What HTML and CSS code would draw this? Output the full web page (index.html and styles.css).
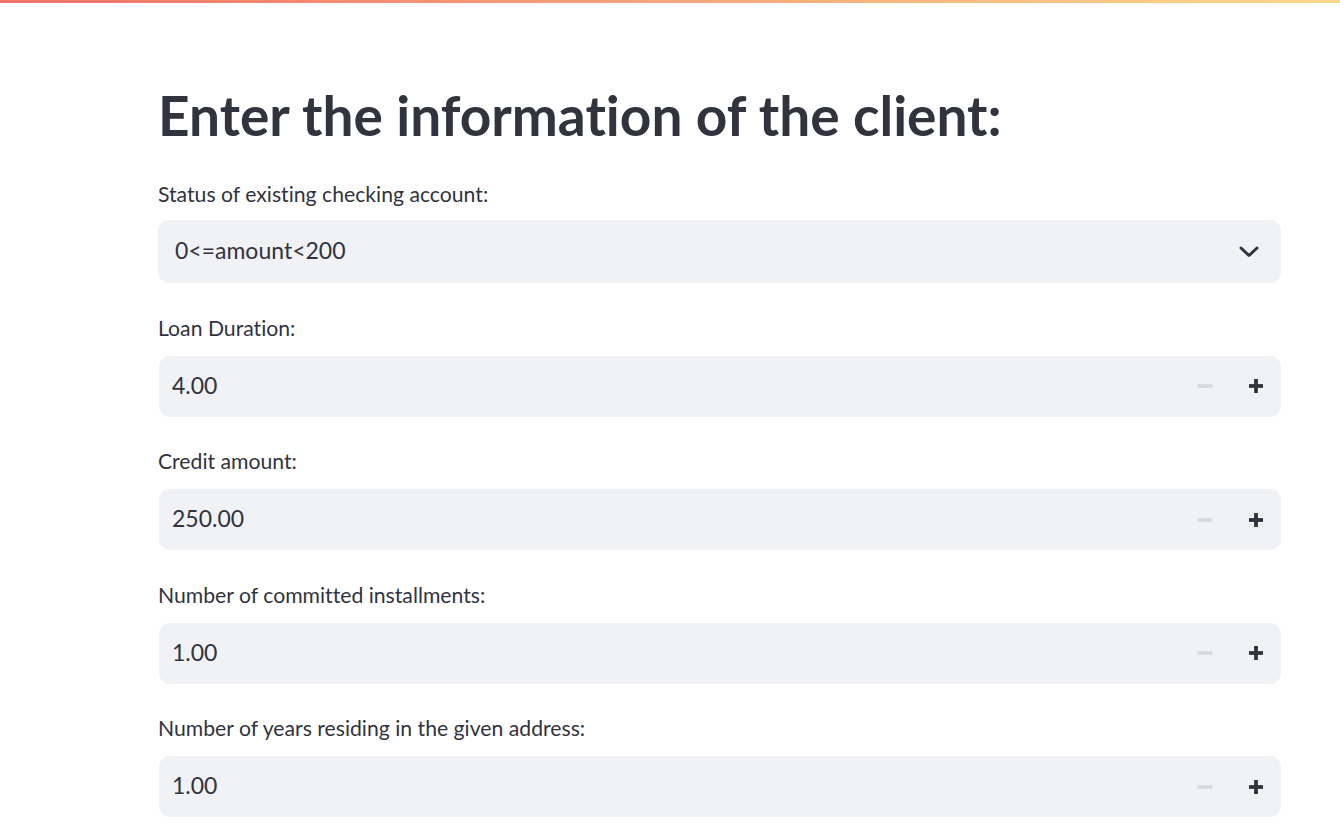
FILE: index.html
```html
<!DOCTYPE html>
<html lang="en">
<head>
<meta charset="utf-8">
<title>Client information</title>
<link rel="stylesheet" href="styles.css">
</head>
<body>
<div class="decoration"></div>
<main class="main">
  <h1 class="title">Enter the information of the client:</h1>

  <div class="field field-select">
    <label class="label">Status of existing checking account:</label>
    <div class="box select">
      <span class="value">0&lt;=amount&lt;200</span>
      <svg class="chevron" width="20" height="12" viewBox="0 0 20 12"><path d="M2 2 L10 9.5 L18 2" fill="none" stroke="#31333f" stroke-width="3" stroke-linecap="round" stroke-linejoin="round"/></svg>
    </div>
  </div>

  <div class="field">
    <label class="label">Loan Duration:</label>
    <div class="box number">
      <span class="value">4.00</span>
      <span class="step minus"><svg width="16" height="16" viewBox="0 0 16 16"><rect x="0.5" y="6.2" width="15" height="3.6" rx="1" fill="#d6d8dd"/></svg></span>
      <span class="step plus"><svg width="16" height="16" viewBox="0 0 16 16"><rect x="1" y="6.1" width="14" height="3.8" fill="#31333f"/><rect x="6.1" y="1" width="3.8" height="14" fill="#31333f"/></svg></span>
    </div>
  </div>

  <div class="field">
    <label class="label">Credit amount:</label>
    <div class="box number">
      <span class="value">250.00</span>
      <span class="step minus"><svg width="16" height="16" viewBox="0 0 16 16"><rect x="0.5" y="6.2" width="15" height="3.6" rx="1" fill="#d6d8dd"/></svg></span>
      <span class="step plus"><svg width="16" height="16" viewBox="0 0 16 16"><rect x="1" y="6.1" width="14" height="3.8" fill="#31333f"/><rect x="6.1" y="1" width="3.8" height="14" fill="#31333f"/></svg></span>
    </div>
  </div>

  <div class="field">
    <label class="label">Number of committed installments:</label>
    <div class="box number">
      <span class="value">1.00</span>
      <span class="step minus"><svg width="16" height="16" viewBox="0 0 16 16"><rect x="0.5" y="6.2" width="15" height="3.6" rx="1" fill="#d6d8dd"/></svg></span>
      <span class="step plus"><svg width="16" height="16" viewBox="0 0 16 16"><rect x="1" y="6.1" width="14" height="3.8" fill="#31333f"/><rect x="6.1" y="1" width="3.8" height="14" fill="#31333f"/></svg></span>
    </div>
  </div>

  <div class="field">
    <label class="label">Number of years residing in the given address:</label>
    <div class="box number">
      <span class="value">1.00</span>
      <span class="step minus"><svg width="16" height="16" viewBox="0 0 16 16"><rect x="0.5" y="6.2" width="15" height="3.6" rx="1" fill="#d6d8dd"/></svg></span>
      <span class="step plus"><svg width="16" height="16" viewBox="0 0 16 16"><rect x="1" y="6.1" width="14" height="3.8" fill="#31333f"/><rect x="6.1" y="1" width="3.8" height="14" fill="#31333f"/></svg></span>
    </div>
  </div>
</main>
</body>
</html>
```

FILE: styles.css
```css
html, body {
  margin: 0;
  padding: 0;
  background: #ffffff;
  height: 100%;
  overflow: hidden;
}
body {
  font-family: Lato, "Liberation Sans", sans-serif;
  color: #31333f;
  font-variant-ligatures: none;
}
.decoration {
  height: 3px;
  background: linear-gradient(90deg, #f2726a, #fad98b);
}
.main {
  padding: 79px 59px 0 158px;
}
.title {
  margin: 0 0 30px 0;
  font-size: 55px;
  line-height: 67px;
  font-weight: 700;
  color: #31333f;
}
.field {
  margin-bottom: 29.5px;
}
.label {
  display: block;
  font-size: 21.2px;
  line-height: 30px;
  margin-bottom: 13px;
  color: #31333f;
}
.field-select .label {
  margin-bottom: 11px;
}
.box {
  display: flex;
  align-items: center;
  background: #f0f2f6;
  border-radius: 11px;
  box-sizing: border-box;
}
.select {
  height: 63px;
  padding: 0 22px 0 17px;
}
.number {
  height: 61px;
  margin-left: 1px;
  padding-left: 13px;
}
.value {
  flex: 1;
  font-size: 23px;
  line-height: 30px;
  padding-bottom: 3px;
  color: #31333f;
}
.chevron {
  display: block;
}
.step {
  width: 51px;
  height: 100%;
  display: flex;
  align-items: center;
  justify-content: center;
}
.step svg {
  display: block;
}
```
